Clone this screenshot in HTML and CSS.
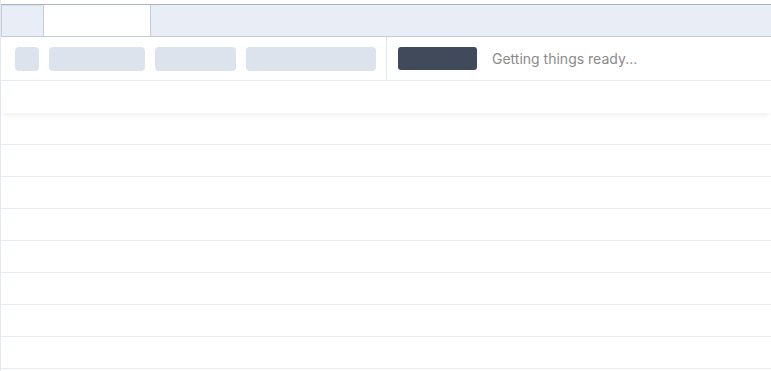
FILE: index.html
```html
<!DOCTYPE html>
<html>
<head>
<meta charset="utf-8">
<link rel="stylesheet" href="styles.css">
</head>
<body>
<div class="app">
  <div class="topgap"></div>
  <div class="tabbar">
    <div class="tab-stub"></div>
    <div class="tab-active"></div>
  </div>
  <div class="toolbar">
    <div class="sk sk1"></div>
    <div class="sk sk2"></div>
    <div class="sk sk3"></div>
    <div class="sk sk4"></div>
    <div class="divider"></div>
    <div class="btn"></div>
    <div class="status">Getting things ready...</div>
  </div>
  <div class="header"></div>
  <div class="rows">
    <div class="row"></div>
    <div class="row"></div>
    <div class="row"></div>
    <div class="row"></div>
    <div class="row"></div>
    <div class="row"></div>
    <div class="row"></div>
    <div class="row"></div>
  </div>
</div>
</body>
</html>
```
FILE: styles.css
```css
html, body {
  margin: 0;
  padding: 0;
  background: #ffffff;
  overflow: hidden;
}
.app {
  height: 100vh;
  border-left: 1px solid #e1e8f3;
  font-family: Inter, "Noto Sans", sans-serif;
}
.topgap {
  height: 4px;
}
.tabbar {
  display: flex;
  height: 31px;
  border-top: 1px solid #aab5c3;
  border-bottom: 1px solid #c3ccd8;
  background: #e9eef6;
}
.tab-stub {
  width: 41px;
  border-left: 1px solid #c3ccd8;
  border-right: 1px solid #c3ccd8;
  border-top: 1px solid #d8dfe9;
}
.tab-active {
  width: 106px;
  background: #ffffff;
  border-right: 1px solid #c3ccd8;
}
.toolbar {
  display: flex;
  align-items: center;
  height: 43px;
  padding-left: 14px;
  border-bottom: 1px solid #e6ecf4;
}
.sk {
  height: 24px;
  border-radius: 4px;
  background: #dde3ec;
  margin-right: 10px;
}
.sk1 { width: 24px; }
.sk2 { width: 96px; }
.sk3 { width: 81px; }
.sk4 { width: 130px; }
.divider {
  align-self: stretch;
  width: 1px;
  background: #dfe6ef;
  margin-right: 11px;
}
.btn {
  width: 79px;
  height: 23px;
  border-radius: 3px;
  background: #414a5b;
  margin-right: 15px;
}
.status {
  font-size: 14px;
  color: #8a8a8a;
}
.header {
  position: relative;
  z-index: 1;
  height: 32px;
  background: #ffffff;
  box-shadow: 0 4px 6px -2px rgba(0, 0, 0, 0.07);
}
.row {
  height: 31px;
  border-bottom: 1px solid #e6ecf5;
}
```
